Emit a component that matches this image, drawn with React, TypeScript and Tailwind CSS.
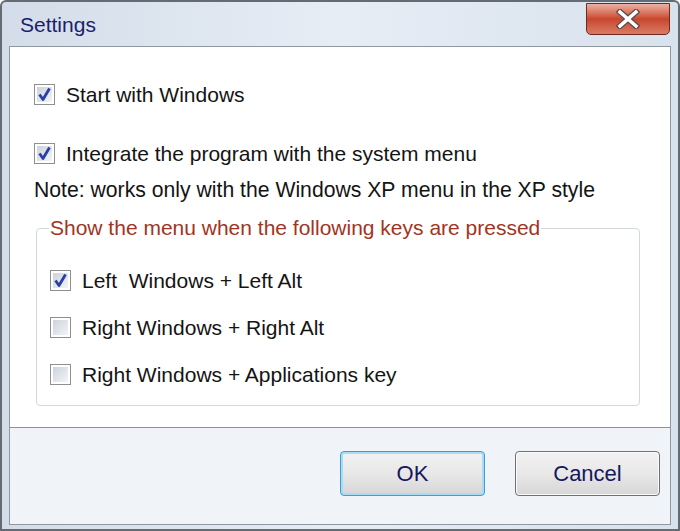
import React from "react";

const font = { fontFamily: '"Liberation Sans", Arial, sans-serif' };

const CheckBox: React.FC<{ checked?: boolean }> = ({ checked }) => (
  <div className="w-[21px] h-[21px] shrink-0 border border-[#8e8f8f] bg-white p-[2px]">
    <div className="w-full h-full bg-gradient-to-br from-[#cdd3dc] to-[#f2f4f7] flex items-center justify-center">
      {checked && (
        <svg width="15" height="15" viewBox="0 0 15 15" fill="none">
          <path d="M2.5 7.5l3.5 5 6.5-11" stroke="#2b3fa6" strokeWidth="2.8" strokeLinejoin="round" />
        </svg>
      )}
    </div>
  </div>
);

const Row: React.FC<{ checked?: boolean; label: string }> = ({ checked, label }) => (
  <div className="h-[24px] flex items-center gap-[11px]">
    <CheckBox checked={checked} />
    <span className="text-[21px] leading-none text-[#141414] whitespace-pre">{label}</span>
  </div>
);

export default function App() {
  return (
    <div className="w-[680px] h-[531px] bg-white" style={font}>
      <div className="w-full h-full flex flex-col rounded-t-[6px] border-2 border-[#646b73] bg-gradient-to-r from-[#d3dde9] via-[#e7edf5] to-[#d8e2ed]">
        {/* Title bar */}
        <div className="h-[44px] flex items-start justify-between shrink-0">
          <span className="mt-[12px] ml-[18px] text-[21px] leading-none text-[#1c1f6e]">Settings</span>
          <div className="mt-[1px] mr-[8px] w-[84px] h-[32px] rounded-b-[5px] border border-[#6e2a20] bg-gradient-to-b from-[#eab1a3] via-[#c8462d] to-[#d97a64] flex items-center justify-center">
            <svg width="30" height="20" viewBox="0 0 30 20" fill="none">
              <path d="M7 3l16 14M23 3L7 17" stroke="#5a4a48" strokeWidth="6" strokeLinecap="square" />
              <path d="M7 3l16 14M23 3L7 17" stroke="#ffffff" strokeWidth="3.5" strokeLinecap="square" />
            </svg>
          </div>
        </div>

        {/* Client area */}
        <div className="flex-1 mx-[7px] mb-[4px] border border-[#8f979f] flex flex-col">
          <div className="h-[381px] bg-white border-b border-[#8c9197] px-[24px] pt-[35px]">
            <Row checked label="Start with Windows" />
            <div className="mt-[35px]">
              <Row checked label="Integrate the program with the system menu" />
            </div>
            <div className="mt-[13px] h-[24px] flex items-center">
              <span className="text-[21.2px] leading-none text-[#141414]">
                Note: works only with the Windows XP menu in the XP style
              </span>
            </div>
            <fieldset className="mt-[14px] ml-[2px] w-[604px] border border-[#d3d8dd] rounded-[4px] pl-[13px] pb-[19px]">
              <legend className="px-[1px] ml-[-1px] text-[21px] leading-[24px] text-[#a3341f]">
                Show the menu when the following keys are pressed
              </legend>
              <div className="mt-[28px] flex flex-col gap-[23px]">
                <Row checked label="Left  Windows + Left Alt" />
                <Row label="Right Windows + Right Alt" />
                <Row label="Right Windows + Applications key" />
              </div>
            </fieldset>
          </div>
          <div className="flex-1 bg-[#f0f4f9] flex justify-end items-start pt-[23px] pr-[10px] gap-[30px]">
            <button className="w-[145px] h-[45px] rounded-[4px] border border-[#3d9ed6] shadow-[inset_0_0_0_2px_#a6dcf5] bg-gradient-to-b from-[#f2f2f2] via-[#e8e8e8] to-[#d6d6d6] text-[22px] text-[#17175e]">
              OK
            </button>
            <button className="w-[145px] h-[45px] rounded-[4px] border border-[#707070] shadow-[inset_0_0_0_1px_#fbfbfb] bg-gradient-to-b from-[#f2f2f2] via-[#e8e8e8] to-[#d6d6d6] text-[22px] text-[#17175e]">
              Cancel
            </button>
          </div>
        </div>
      </div>
    </div>
  );
}
